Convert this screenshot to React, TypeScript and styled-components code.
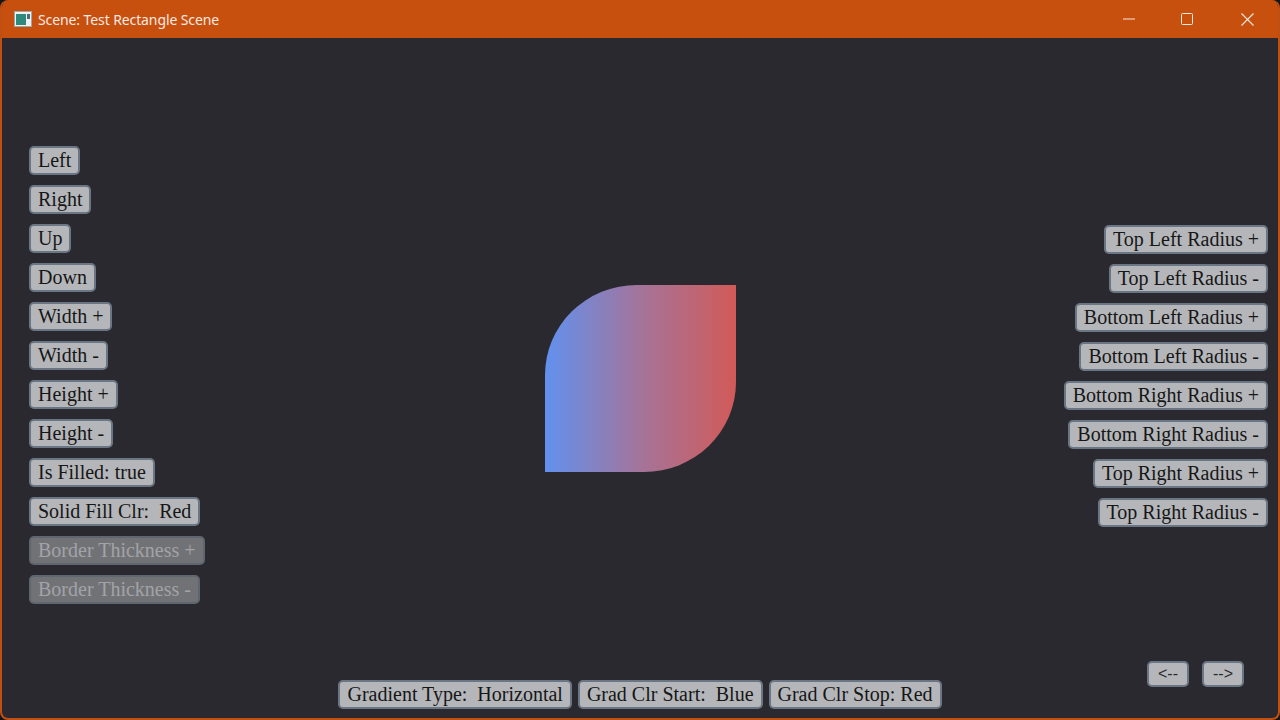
import React from 'react';
import styled, { createGlobalStyle } from 'styled-components';

const GlobalStyle = createGlobalStyle`
  html, body {
    margin: 0;
    padding: 0;
    background: #151515;
  }
  #root {
    width: 1280px;
    height: 720px;
  }
`;

const Window = styled.div`
  box-sizing: border-box;
  width: 1280px;
  height: 720px;
  display: flex;
  flex-direction: column;
  border: 2px solid #c24f12;
  border-top: none;
  border-radius: 8px;
  overflow: hidden;
  background: #2a292f;
`;

const TitleBar = styled.div`
  height: 38px;
  flex: none;
  display: flex;
  align-items: center;
  background: #c8500f;
  color: #f6e9e0;
  font-family: 'Noto Sans', 'Open Sans', sans-serif;
  font-size: 14px;
  padding-left: 12px;
`;

const AppIcon = styled.svg`
  width: 18px;
  height: 16px;
  margin-right: 6px;
  flex: none;
`;

const Title = styled.span`
  flex: 1;
  letter-spacing: -0.1px;
`;

const CaptionButton = styled.div`
  width: 58px;
  height: 38px;
  display: flex;
  align-items: center;
  justify-content: center;
  &:last-child {
    width: 62px;
  }
`;

const Scene = styled.div`
  flex: 1;
  display: grid;
  grid-template-columns: 1fr;
  grid-template-rows: 1fr;
  font-family: 'Liberation Serif', 'Times New Roman', serif;
`;

const Column = styled.div<{ $side: 'left' | 'right'; $top: number }>`
  grid-area: 1 / 1;
  display: flex;
  flex-direction: column;
  gap: 10px;
  align-items: ${(p) => (p.$side === 'left' ? 'flex-start' : 'flex-end')};
  justify-self: ${(p) => (p.$side === 'left' ? 'start' : 'end')};
  align-self: start;
  padding-top: ${(p) => p.$top}px;
  padding-left: ${(p) => (p.$side === 'left' ? 27 : 0)}px;
  padding-right: ${(p) => (p.$side === 'right' ? 10 : 0)}px;
`;

const BottomBar = styled.div`
  grid-area: 1 / 1;
  align-self: end;
  justify-self: center;
  display: flex;
  gap: 6px;
  margin-bottom: 9px;
`;

const NavBar = styled.div`
  grid-area: 1 / 1;
  align-self: end;
  justify-self: end;
  display: flex;
  gap: 13px;
  margin: 0 34px 31px 0;
`;

const Canvas = styled.div`
  grid-area: 1 / 1;
  place-self: center;
`;

const Shape = styled.div`
  width: 191px;
  height: 187px;
  margin-left: 1px;
  border-top-left-radius: 92px 90px;
  border-bottom-right-radius: 92px 90px;
  background: linear-gradient(to right, #6191ef, #a4749a 50%, #d25a58);
`;

const Button = styled.div<{ $disabled?: boolean }>`
  box-sizing: border-box;
  height: 29px;
  padding: 0 7px 0 7px;
  display: flex;
  align-items: center;
  font-size: 20px;
  line-height: 23px;
  white-space: pre;
  border: 2px solid ${(p) => (p.$disabled ? '#5f6670' : '#6b7684')};
  border-radius: 5px;
  background: ${(p) => (p.$disabled ? '#717276' : '#b5b6ba')};
  color: ${(p) => (p.$disabled ? '#a2a3a7' : '#161616')};
`;

const NavButton = styled.div`
  box-sizing: border-box;
  width: 42px;
  height: 26px;
  display: flex;
  align-items: center;
  justify-content: center;
  font-family: 'Liberation Sans', Arial, sans-serif;
  font-size: 16px;
  color: #2a2a2a;
  border: 2px solid #6b7684;
  border-radius: 5px;
  background: #b5b6ba;
`;

const leftButtons = [
  { label: 'Left' },
  { label: 'Right' },
  { label: 'Up' },
  { label: 'Down' },
  { label: 'Width +' },
  { label: 'Width -' },
  { label: 'Height +' },
  { label: 'Height -' },
  { label: 'Is Filled: true' },
  { label: 'Solid Fill Clr:  Red' },
  { label: 'Border Thickness +', disabled: true },
  { label: 'Border Thickness -', disabled: true },
];

const rightButtons = [
  'Top Left Radius +',
  'Top Left Radius -',
  'Bottom Left Radius +',
  'Bottom Left Radius -',
  'Bottom Right Radius +',
  'Bottom Right Radius -',
  'Top Right Radius +',
  'Top Right Radius -',
];

const bottomButtons = ['Gradient Type:  Horizontal', 'Grad Clr Start:  Blue', 'Grad Clr Stop: Red'];

export default function App() {
  return (
    <>
      <GlobalStyle />
      <Window>
        <TitleBar>
          <AppIcon viewBox="0 0 18 16">
            <rect x="0.5" y="0.5" width="17" height="15" fill="#f2f2f2" stroke="#9aa" strokeWidth="1" />
            <rect x="2" y="3" width="10" height="11" fill="#2f8a7e" />
            <rect x="13" y="3" width="3" height="5" fill="#4a6f7a" />
          </AppIcon>
          <Title>Scene: Test Rectangle Scene</Title>
          <CaptionButton>
            <svg width="12" height="12" viewBox="0 0 12 12">
              <line x1="0" y1="6" x2="12" y2="6" stroke="#f6e9e0" strokeWidth="1" />
            </svg>
          </CaptionButton>
          <CaptionButton>
            <svg width="12" height="12" viewBox="0 0 12 12">
              <rect x="0.5" y="0.5" width="11" height="11" rx="1" fill="none" stroke="#f6e9e0" strokeWidth="1" />
            </svg>
          </CaptionButton>
          <CaptionButton>
            <svg width="13" height="13" viewBox="0 0 13 13">
              <path d="M0.5 0.5 L12.5 12.5 M12.5 0.5 L0.5 12.5" stroke="#f6e9e0" strokeWidth="1.1" />
            </svg>
          </CaptionButton>
        </TitleBar>
        <Scene>
          <Canvas>
            <Shape />
          </Canvas>
          <Column $side="left" $top={108}>
            {leftButtons.map((b) => (
              <Button key={b.label} $disabled={b.disabled}>
                {b.label}
              </Button>
            ))}
          </Column>
          <Column $side="right" $top={187}>
            {rightButtons.map((label) => (
              <Button key={label}>{label}</Button>
            ))}
          </Column>
          <BottomBar>
            {bottomButtons.map((label) => (
              <Button key={label}>{label}</Button>
            ))}
          </BottomBar>
          <NavBar>
            <NavButton>&lt;--</NavButton>
            <NavButton>--&gt;</NavButton>
          </NavBar>
        </Scene>
      </Window>
    </>
  );
}
